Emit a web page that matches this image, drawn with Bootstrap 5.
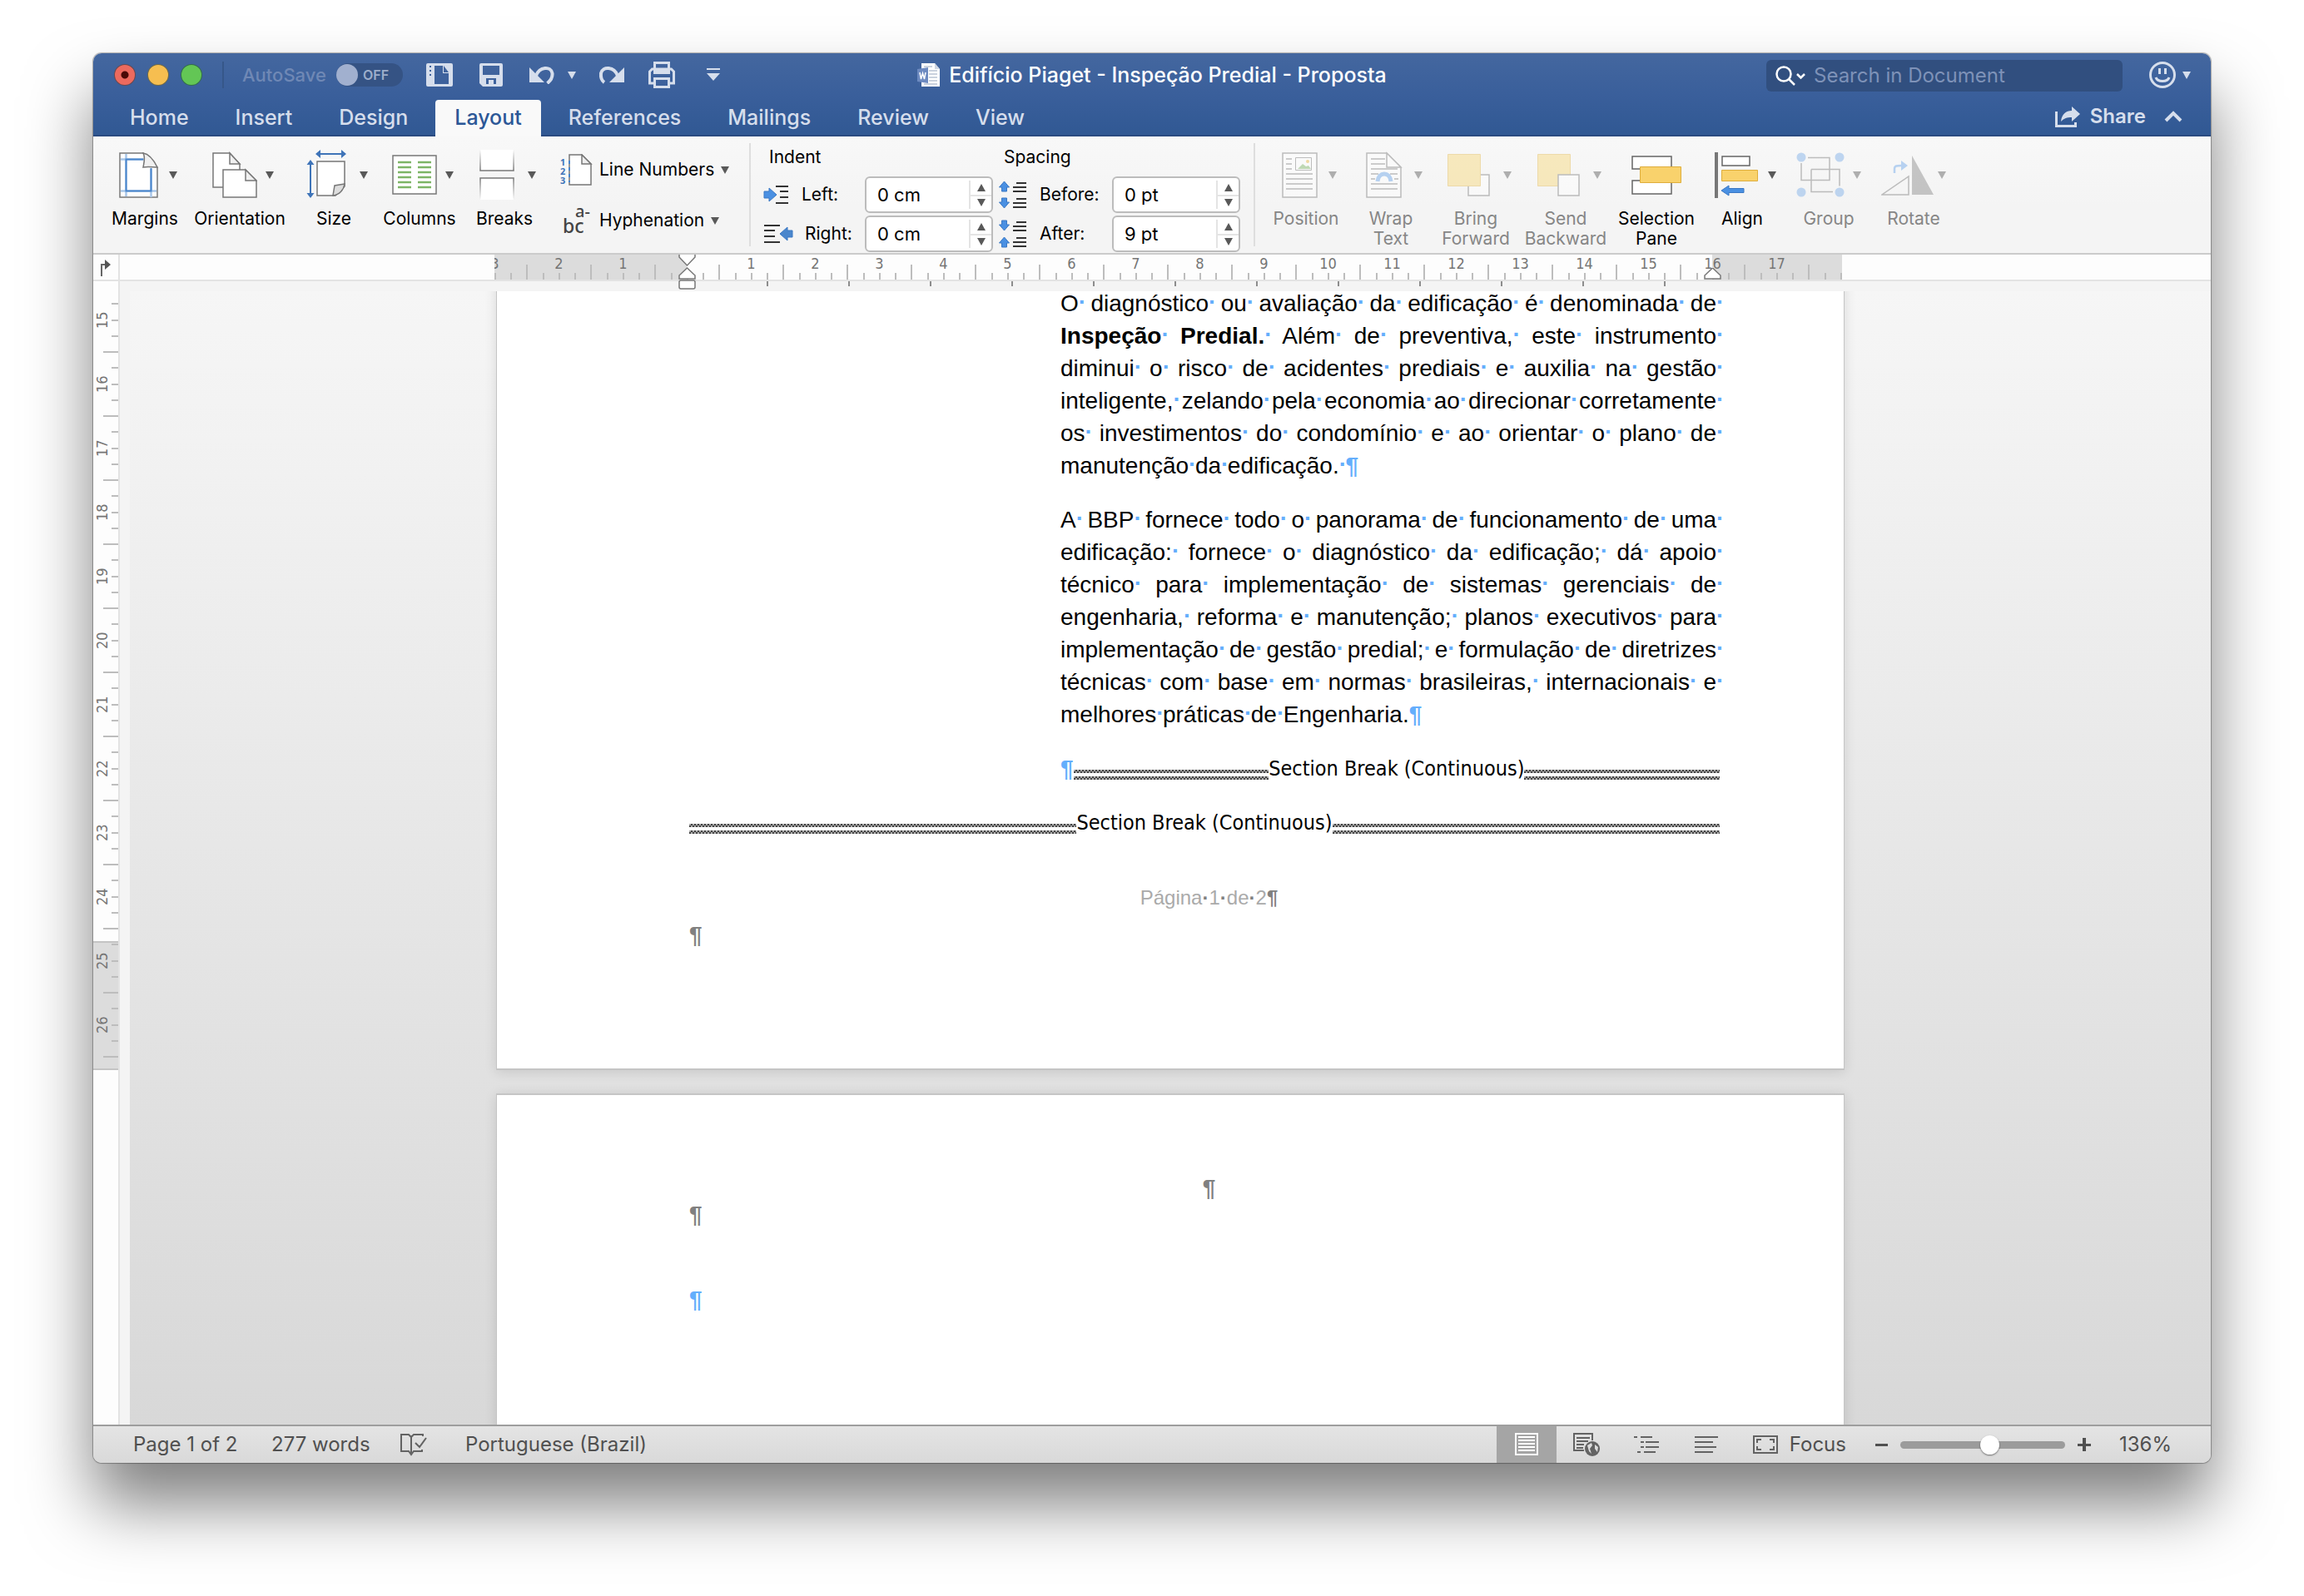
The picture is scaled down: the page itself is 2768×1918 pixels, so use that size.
<!DOCTYPE html>
<html lang="en">
<head>
<meta charset="utf-8">
<meta name="viewport" content="width=device-width, initial-scale=1">
<title>Edifício Piaget - Inspeção Predial - Proposta</title>
<link href="https://cdn.jsdelivr.net/npm/bootstrap@5.3.0/dist/css/bootstrap.min.css" rel="stylesheet">
<style>
:root{--ui:Inter,Roboto,"Liberation Sans",sans-serif;--pale:#d6deec}
body{font-family:var(--ui);background:#fff;padding:64px 112px 160px;color:#000}
svg{display:block;flex:none}
button{font-family:inherit;color:inherit;background:none;border:0;padding:0}
.win{border-radius:10px;overflow:hidden;box-shadow:0 0 1px 1px rgba(0,0,0,.3),0 50px 80px rgba(0,0,0,.5);background:#f4f4f4;min-height:0}
.tri{width:0;height:0;border:5px solid transparent;border-top:9px solid #595959;border-bottom:0;flex:none}
/* title bar */
.top{background:linear-gradient(#44679f,#3a5f9b 50%,#305893);color:var(--pale)}
.top .tri{border-top-color:var(--pale)}
.titlebar{display:grid;grid-template-columns:1fr auto 1fr;height:56px;padding-bottom:4px}
.lights{gap:14px;padding-left:25px}
.light{width:26px;height:26px;border-radius:50%;border:1px solid rgba(20,50,70,.6)}
.light.red{background:radial-gradient(circle,#4a0a06 0 4px,#ec6a5e 5px)}
.light.yel{background:#f6be50}.light.grn{background:#63c655}
.bar-sep{width:2px;height:32px;background:#365789;margin:0 22px 0 24px}
.autosave{font-size:22px;font-weight:500;color:#6f88b5;width:102px}
.pill{width:80px;height:28px;border-radius:14px;background:#355384;font-size:16px;font-weight:600;color:#9daecb;gap:6px;margin-left:11px}
.knob{appearance:none;width:26px;height:26px;border-radius:50%;background:#a1b0cf;margin:0}
.quick{gap:32px;margin-left:28px}
.titlemid{gap:11px}
.doctitle{font-size:25px;font-weight:500;color:#fff;line-height:32px}
.search{width:428px;height:38px;border-radius:6px;background:#314f7f;margin-top:1px;padding-left:11px;gap:10px}
.search input{background:none;border:0;outline:0;color:#fff;font-size:24px;width:100%;padding:0}
.search input::placeholder{color:#7e92b8;opacity:1}
.tabs{height:44px;border-bottom:2px solid #2a4a80;padding-left:16px}
.tabs a{color:var(--pale);text-decoration:none;font-size:25px;font-weight:500;line-height:42px;padding:0 23px;margin:0 5px}
.tabs a.on{background:#f9f9f9;color:#2b5797;border-radius:4px 4px 0 0;height:44px}
.share{font-size:24px;font-weight:600;gap:12px}
/* ribbon */
.ribbon{background:linear-gradient(#f8f8f8,#f4f4f4 60%);height:142px;border-bottom:2px solid #cbcbcb;padding-left:8px;font-size:21px;line-height:24px}
.big{padding-top:14px;text-align:center}
.big .pic{height:64px;margin-bottom:9px;gap:10px;padding-left:8px}
.big .pic.flat{padding-left:0}
.big:disabled{color:#868686}
.big:disabled .pic{opacity:.45}
.w94{width:94px}.w98{width:98px}.w100{width:100px}.w104{width:104px}.w106{width:106px}.w108{width:108px}.w110{width:110px}.w120{width:120px}
.stack{padding:14px 0 0 14px;width:242px}
.stack button{height:52px;gap:8px;margin-bottom:9px}
.vr-line{width:2px;height:124px;background:#dedede;margin-top:8px}
.grid-ind{display:grid;padding:9px 0 0 15px;row-gap:3px}
.grid-ind.a{grid-template-columns:46px 76px 154px;width:297px}
.grid-ind.b{grid-template-columns:50px 87px 154px;width:307px;padding-left:0}
.grid-ind h2{grid-column:1/-1;font-size:21px;line-height:24px;height:36px;margin:0;font-weight:400;padding:4px 0 0 7px}
.spin{height:44px;border:2px solid #bcbcbc;border-radius:6px;background:#fff}
.spin input{border:0;outline:0;width:100%;font-size:22px;padding:0 0 0 13px;background:none}
.spin div{width:27px;flex:none;border-left:2px solid #e4e4e4;margin:3px 0}
.spin button{height:18px}
.spin button+button{border-top:2px solid #e4e4e4}
.tri.up{border-top:0;border-bottom:9px solid #595959}
/* rulers */
.hruler{height:32px;background:#fdfdfd;border-bottom:2px solid #e3e3e3;font-family:"DejaVu Sans Condensed","DejaVu Sans",sans-serif;font-size:18px;color:#757575;line-height:22px}
.corner{width:32px;border-right:2px solid #e3e3e3}
.scalewrap{padding-left:7px}
.scale{width:1619px;height:30px;position:relative;
background:
linear-gradient(90deg,#bdbdbd 2px,transparent 0) 0 100%/77px 8px repeat-x,
linear-gradient(90deg,#bdbdbd 2px,transparent 0) 19px 100%/77px 8px repeat-x,
linear-gradient(90deg,#bdbdbd 2px,transparent 0) 38px 100%/77px 18px repeat-x,
linear-gradient(90deg,#bdbdbd 2px,transparent 0) 58px 100%/77px 8px repeat-x,
linear-gradient(90deg,#dcdcdc 231px,transparent 231px 1463px,#dcdcdc 1463px)}
.nums{overflow:hidden}
.nums span{width:77px;flex:none;text-align:center;margin-left:-38px;margin-right:38px}
.pin{position:absolute;z-index:2}
.pin.l{left:221px;top:0}.pin.r{left:1453px;top:16px}
.tabstops{height:12px;background:#f4f4f4;padding-left:7px}
.tabstops div{width:1619px}
.tabstops i{display:block;margin-left:231px;width:1232px;height:6px;background:linear-gradient(90deg,transparent 96px,#8d8d8d 0) 0 0/98px 6px repeat-x}
.vruler{width:32px;border-right:2px solid #e3e3e3;background:#fdfdfd;font-family:"DejaVu Sans Condensed","DejaVu Sans",sans-serif;font-size:18px;color:#757575;overflow:hidden;padding-top:12px}
.vscale{height:936px;background:
linear-gradient(#bdbdbd 2px,transparent 0) 100% 34px/8px 77px repeat-y,
linear-gradient(#bdbdbd 2px,transparent 0) 100% 53px/8px 77px repeat-y,
linear-gradient(#bdbdbd 2px,transparent 0) 100% 72px/18px 77px repeat-y,
linear-gradient(#bdbdbd 2px,transparent 0) 100% 91px/8px 77px repeat-y,
linear-gradient(transparent 781px,#c4c4c4 781px 783px,#dcdcdc 783px);border-bottom:2px solid #c4c4c4;overflow:hidden}
.vscale span{display:block;height:77px;writing-mode:vertical-rl;transform:rotate(180deg);text-align:center;line-height:22px;width:22px}
.vscale span:first-child{margin-top:-4px}
.canvas-pad{width:12px;background:#f4f4f4}
.canvas{background:linear-gradient(#f6f6f6,#e6e6e6 52%,#d8d8d8);overflow:hidden;min-width:0}
/* pages */
.sheet{width:1620px;margin:0 auto 28px;border:2px solid #c5c5c5;border-width:2px 1px;background:#fff;box-shadow:0 2px 14px rgba(0,0,0,.12);padding:92px 153px 0 231px;font:28px/39px "Liberation Sans",Arial,sans-serif;color:#000;flex:none;height:976px}
.sheet.first{margin-top:-40px;padding-top:33px}
.sheet p{margin:0 0 26px}
.col-text{padding-left:446px}
.ln{display:block;white-space:nowrap;text-align:justify;text-align-last:justify}
.ln.end{text-align-last:left}
.wd{position:relative}
.wd::after{content:"·";position:absolute;left:100%;top:0;color:#64aefc;line-height:1;font-weight:700}
.pil{color:#64aefc;font-weight:700}
.pil.g{color:#808080}
.brk{height:39px;margin:0 -4px 26px 0;font:25px/39px "DejaVu Sans Condensed","DejaVu Sans",sans-serif}
.brk .pil{font:700 28px/39px "Liberation Sans",Arial,sans-serif}
.brk hr{flex:1;height:12px;margin:14px 0 0;border:0;opacity:1;background:linear-gradient(transparent 4px,#fff 4px 8px,transparent 8px),repeating-conic-gradient(#444 0 25%,#a8a8a8 0 50%) 0 0/4px 4px}
.foot{font-size:24px;line-height:32px;margin-top:55px;color:#aaa;margin-bottom:9px}
.foot b{color:#808080}
.foot .pil,.mid .pil{margin-right:-15px}
.mid{height:32px}
.gap-head{height:102px}
/* status bar */
.status{height:46px;border-top:2px solid #9e9e9e;background:linear-gradient(#e4e4e4,#d9d9d9);font-size:24px;line-height:32px;color:#505050;padding:0 47px 0 48px}
.st-page{width:166px}.st-words{width:155px}.st-proof{width:78px}
.view{width:72px;height:44px}
.view.on{background:#a5a5a5}
.focus-btn{gap:13px;margin-left:20px;margin-right:33px}
.zoom{appearance:none;width:198px;height:9px;border-radius:5px;background:#9b9b9b;margin:0 15px}
.zoom::-webkit-slider-thumb{appearance:none;width:23px;height:23px;border-radius:50%;background:#fff;box-shadow:0 1px 2px rgba(0,0,0,.5)}
.pct{margin-left:33px}
</style>
<script src="https://cdn.jsdelivr.net/npm/bootstrap@5.3.0/dist/js/bootstrap.bundle.min.js"></script>
</head>
<body class="vh-100 d-flex flex-column overflow-hidden">
<div class="win d-flex flex-column flex-grow-1">

<header class="top flex-shrink-0">
  <div class="titlebar">
    <div class="d-flex align-items-center">
      <div class="lights d-flex"><span class="light red"></span><span class="light yel"></span><span class="light grn"></span></div>
      <span class="bar-sep"></span>
      <label class="autosave" for="auto">AutoSave</label>
      <span class="pill d-flex align-items-center"><input type="checkbox" role="switch" class="knob" id="auto">OFF</span>
      <div class="quick d-flex align-items-center">
      <button aria-label="Templates"><svg width="32" height="28" viewBox="0 0 32 28"><path fill="#d6deec" fill-rule="evenodd" d="M2 0h28a2 2 0 0 1 2 2v24a2 2 0 0 1-2 2H2a2 2 0 0 1-2-2V2a2 2 0 0 1 2-2zM10 3v22h17V12h-7V3zM21 3v8h6z"/><path stroke="#3d629d" stroke-width="2" stroke-dasharray="2 3" d="M5 3v12"/></svg></button>
      <button aria-label="Save"><svg width="28" height="28" viewBox="0 0 28 28"><path fill="#d6deec" fill-rule="evenodd" d="M2 0h24a2 2 0 0 1 2 2v24a2 2 0 0 1-2 2H4l-4-4V2a2 2 0 0 1 2-2zM4 3v11h20V3zM8 18v7h3v-5h6v5h3v-7z"/><path fill="#d6deec" d="M12 21h3v5h-3z"/></svg></button>
      <button aria-label="Undo" class="d-flex align-items-center gap-3"><svg width="30" height="22" viewBox="0 0 30 22"><path fill="#d6deec" d="M0 2v18h18z"/><path fill="none" stroke="#d6deec" stroke-width="4" d="M8 12C12 1 26 0 27.500 9c.5 5-2 9-6 12"/></svg><span class="tri"></span></button>
      <button aria-label="Redo" style="margin-left:-5px"><svg width="31" height="22" viewBox="0 0 31 22"><path fill="#d6deec" d="M31 2v18H13z"/><path fill="none" stroke="#d6deec" stroke-width="4" d="M23 12C19 1 5 0 3 9c-.5 5 1 9 4 11"/></svg></button>
      <button aria-label="Print" style="margin-left:-3px"><svg width="32" height="32" viewBox="0 0 32 32"><g fill="none" stroke="#d6deec" stroke-width="3"><path d="M7.500 10V1.500h17V10M7 26H1.500V12l3-3h23l3 3v14H25"/><path d="M7.500 20.500h17v10h-17z"/></g><path fill="#d6deec" d="M6 9h20v6H6z"/></svg></button>
      <button aria-label="Customize toolbar"><svg width="28" height="16" viewBox="-6 0 28 16"><path fill="#d6deec" d="M0 0h16v2H0zM0 6h16l-8 9z"/></svg></button>
      </div>
    </div>
    <div class="titlemid d-flex align-items-center">
      <svg width="27" height="28" viewBox="0 0 27 28"><path fill="#fff" d="M5 0h16l6 7v21H5z"/><path stroke="#b9c3d3" stroke-width="1.500" d="M14 9h10M14 13h10M14 17h10M14 21h10M8 25h16M8 4h10"/><path fill="#cfd6e2" d="M21 0v7h6z"/><path fill="#6d8ac0" d="M0 7l13-2v19L0 22z"/><path fill="none" stroke="#fff" stroke-width="1.500" d="M3 11l1.500 8L6.500 12l2 7 1.500-8"/></svg>
      <span class="doctitle">Edifício Piaget - Inspeção Predial - Proposta</span>
    </div>
    <div class="d-flex align-items-center justify-content-end pe-4">
      <div class="search d-flex align-items-center">
        <svg width="36" height="24" viewBox="0 0 36 24"><g fill="none" stroke="#fff" stroke-width="2.500"><circle cx="10" cy="10" r="8.500"/><path d="M16 16l7 7M26 10l4.500 4.500L35 10"/></g></svg>
        <input type="text" aria-label="Search in Document" placeholder="Search in Document">
      </div>
      <button aria-label="Feedback" class="d-flex align-items-center gap-2" style="margin-left:32px"><svg width="32" height="32" viewBox="0 0 32 32"><g fill="none" stroke="#d6deec" stroke-width="3"><circle cx="16" cy="16" r="14.500"/><path d="M12.500 8v7M19.500 8v7M8 19c2 6 14 6 16 0"/></g></svg><span class="tri"></span></button>
    </div>
  </div>
  <div class="tabs d-flex align-items-start">
    <nav class="d-flex"><a href="#">Home</a><a href="#">Insert</a><a href="#">Design</a><a href="#" class="on">Layout</a><a href="#">References</a><a href="#">Mailings</a><a href="#">Review</a><a href="#">View</a></nav>
    <div class="d-flex align-items-center ms-auto" style="padding-right:34px;height:40px">
      <button class="share d-flex align-items-center"><svg width="30" height="25" viewBox="0 0 30 25"><path fill="none" stroke="#d6deec" stroke-width="3" d="M1.500 6v17.500h23V19"/><path fill="#d6deec" d="M7 18C8 9 13 5 20 5V0l10 9-10 9v-5c-6 0-9 1-13 5z"/></svg>Share</button>
      <button aria-label="Collapse ribbon" style="margin-left:22px"><svg width="22" height="14" viewBox="0 0 22 14"><path fill="none" stroke="#d6deec" stroke-width="4" d="M2 12l9-9 9 9"/></svg></button>
    </div>
  </div>
</header>

<div class="ribbon d-flex align-items-start flex-shrink-0">
  <button class="big w108"><span class="pic d-flex align-items-center justify-content-center"><svg width="50" height="64" viewBox="0 0 50 64"><path fill="#fff" stroke="#777" stroke-width="1.500" d="M1 6h28l17 17v36H1z"/><path stroke="#a9c6e8" stroke-width="2.500" d="M8.500 7v51M38.500 25v34M2 13.500h28M2 51.500h43"/><path fill="none" stroke="#4a86cc" stroke-width="2" d="M29 13.500H8.500v38h30V24"/><path fill="#f0f0f0" stroke="#777" stroke-width="1.500" d="M29 6c3 6 1 11 0 17 6-1 12 0 17 0C42 15 36 7 29 6z"/></svg><span class="tri"></span></span>Margins</button>
  <button class="big w120"><span class="pic d-flex align-items-center justify-content-center"><svg width="54" height="64" viewBox="0 0 54 64"><g fill="#fff" stroke="#777" stroke-width="1.500"><path d="M1 6h20l12 13v28H1z"/><path fill="#f0f0f0" d="M21 6v13h12z"/><path d="M13 26h27l13 13v20H13z"/><path fill="#f0f0f0" d="M40 26v13h13z"/></g></svg><span class="tri"></span></span>Orientation</button>
  <button class="big w106"><span class="pic d-flex align-items-center justify-content-center"><svg width="54" height="64" viewBox="0 0 54 64"><path fill="#fff" stroke="#777" stroke-width="1.500" d="M13 16h33v30L35 57H13z"/><path fill="#ddd" stroke="#777" stroke-width="1.500" d="M46 43l-12 2-2 12c8-1 13-7 14-14z"/><g stroke="#3f74b8" stroke-width="2"><path d="M14 7h32M5 17v39"/></g><path fill="#3f74b8" d="M11 7l6-5v10zM48 7l-6-5v10zM5 14l-4.500 6h9zM5 60l-4.500-6h9z"/></svg><span class="tri"></span></span>Size</button>
  <button class="big w100"><span class="pic d-flex align-items-center justify-content-center"><svg width="54" height="64" viewBox="0 0 54 64"><path fill="#fff" stroke="#777" stroke-width="1.500" d="M1 9h52v46H1z"/><path stroke="#7db566" stroke-width="2.500" d="M7 17h16M7 23h16M7 29h16M7 35h16M7 41h16M7 47h16M31 17h16M31 23h16M31 29h16M31 35h16M31 41h16M31 47h16"/></svg><span class="tri"></span></span>Columns</button>
  <button class="big w104"><span class="pic d-flex align-items-center justify-content-center"><svg width="48" height="64" viewBox="0 0 48 64"><defs><linearGradient id="fa" x2="0" y2="1"><stop stop-color="#777" stop-opacity="0"/><stop offset="1" stop-color="#777"/></linearGradient><linearGradient id="fb" x2="0" y2="1"><stop stop-color="#777"/><stop offset="1" stop-color="#777" stop-opacity="0"/></linearGradient></defs><path fill="#fff" stroke="url(#fa)" stroke-width="1.500" d="M1 2v25h40V2"/><path fill="#fff" stroke="url(#fb)" stroke-width="1.500" d="M1 62V36h40v26"/></svg><span class="tri"></span></span>Breaks</button>
  <div class="stack">
    <button class="d-flex align-items-center"><svg width="40" height="38" viewBox="0 0 40 38"><path fill="#fff" stroke="#777" stroke-width="1.500" d="M12 1h15l11 11v25H12z"/><path fill="#eee" stroke="#777" stroke-width="1.500" d="M27 1v11h11z"/><path stroke="#4a86cc" stroke-width="2" stroke-dasharray="4 4" d="M12 8v26"/><g fill="#3f74b8" font-family="Open Sans,sans-serif" font-size="11" font-weight="700"><text x="1" y="14">1</text><text x="1" y="25">2</text><text x="1" y="36">3</text></g></svg>Line Numbers<span class="tri"></span></button>
    <button class="d-flex align-items-center"><svg width="40" height="44" viewBox="0 0 40 44" overflow="visible"><g fill="#444" font-family="Noto Sans,sans-serif" font-weight="500"><text x="19" y="18" font-size="20">a-</text><text x="4" y="37" font-size="23">bc</text></g></svg>Hyphenation<span class="tri"></span></button>
  </div>
  <div class="vr-line"></div>
  <div class="grid-ind a align-items-center">
    <h2>Indent</h2>
    <svg width="32" height="24" viewBox="0 0 32 24"><path fill="#4a90e2" stroke="#3b78c4" d="M1 8h6V4l9 8-9 8v-4H1z"/><path stroke="#333" stroke-width="2" d="M15 2h15M20 8h10M20 15h10M15 22h15"/></svg><label for="il">Left:</label>
    <div class="spin d-flex"><input id="il" type="text" value="0 cm"><div class="d-flex flex-column"><button class="d-flex align-items-center justify-content-center" aria-label="Increase left"><span class="tri up"></span></button><button class="d-flex align-items-center justify-content-center" aria-label="Decrease left"><span class="tri"></span></button></div></div>
    <svg width="36" height="24" viewBox="0 0 36 24"><path fill="#4a86cc" stroke="#3b78c4" d="M35 8h-6V4l-9 8 9 8v-4h6z"/><path stroke="#333" stroke-width="2" d="M1 2h19M1 8h13M1 15h13M1 22h19"/></svg><label for="ir" class="ps-1">Right:</label>
    <div class="spin d-flex"><input id="ir" type="text" value="0 cm"><div class="d-flex flex-column"><button class="d-flex align-items-center justify-content-center" aria-label="Increase right"><span class="tri up"></span></button><button class="d-flex align-items-center justify-content-center" aria-label="Decrease right"><span class="tri"></span></button></div></div>
  </div>
  <div class="grid-ind b align-items-center">
    <h2>Spacing</h2>
    <svg width="36" height="34" viewBox="0 0 36 34"><path fill="#4a90e2" stroke="#3b78c4" d="M7.500 1l6 7h-3v5h-6V8h-3zM7.500 33l6-7h-3v-5h-6v5h-3z"/><path stroke="#333" stroke-width="2" d="M22 3h12M18 8h16M18 13h16M22 22h12M18 27h16M18 32h16"/></svg><label for="sb">Before:</label>
    <div class="spin d-flex"><input id="sb" type="text" value="0 pt"><div class="d-flex flex-column"><button class="d-flex align-items-center justify-content-center" aria-label="Increase before"><span class="tri up"></span></button><button class="d-flex align-items-center justify-content-center" aria-label="Decrease before"><span class="tri"></span></button></div></div>
    <svg width="36" height="34" viewBox="0 0 36 34"><path fill="#4a90e2" stroke="#3b78c4" d="M7.500 13l6-7h-3V1h-6v5h-3zM7.500 21l6 7h-3v5h-6v-5h-3z"/><path stroke="#333" stroke-width="2" d="M22 3h12M18 8h16M18 13h16M22 22h12M18 27h16M18 32h16"/></svg><label for="sa">After:</label>
    <div class="spin d-flex"><input id="sa" type="text" value="9 pt"><div class="d-flex flex-column"><button class="d-flex align-items-center justify-content-center" aria-label="Increase after"><span class="tri up"></span></button><button class="d-flex align-items-center justify-content-center" aria-label="Decrease after"><span class="tri"></span></button></div></div>
  </div>
  <div class="vr-line me-2"></div>
  <button class="big w106" disabled><span class="pic d-flex align-items-center justify-content-center"><svg width="46" height="64" viewBox="0 0 46 64"><path fill="#fff" stroke="#777" stroke-width="1.500" d="M1 6h41v53H1z"/><path stroke="#999" stroke-width="2" d="M5 13h7M5 19h7M5 25h7M5 31h32M5 37h32M5 43h32M5 49h32"/><path fill="#fff" stroke="#777" d="M16.500 11.500h19v15h-19z"/><path fill="#7db566" d="M19 25l6-6 4 3 3-1 3 4z"/><circle cx="31" cy="16" r="2" fill="#e9b53c"/></svg><span class="tri"></span></span>Position</button>
  <button class="big w98" disabled><span class="pic d-flex align-items-center justify-content-center"><svg width="48" height="64" viewBox="0 0 48 64"><path fill="#fff" stroke="#777" stroke-width="1.500" d="M1 6h24l17 17v36H1z"/><path fill="#fff" stroke="#777" stroke-width="1.500" d="M25 6v17h17z"/><path stroke="#999" stroke-width="2" d="M6 13h17M6 19h17M6 25h32M6 31h9M29 31h9M6 37h5M34 37h5M6 43h32M6 49h32"/><path fill="none" stroke="#6aa5ea" stroke-width="5" d="M14 40c1-12 15-12 16 0"/></svg><span class="tri"></span></span>Wrap<br>Text</button>
  <button class="big w106" disabled><span class="pic d-flex align-items-center justify-content-center"><svg width="58" height="64" viewBox="0 0 58 64"><path fill="#fff" stroke="#777" stroke-width="1.500" d="M26 32h25v25H26z"/><path fill="#f8d878" stroke="#e3b94e" d="M1.500 7.500h39v38h-39z"/></svg><span class="tri"></span></span>Bring<br>Forward</button>
  <button class="big w110" disabled><span class="pic d-flex align-items-center justify-content-center"><svg width="58" height="64" viewBox="0 0 58 64"><path fill="#f8d878" stroke="#e3b94e" d="M1.500 7.500h39v38h-39z"/><path fill="#fff" stroke="#777" stroke-width="1.500" d="M26 32h25v25H26z"/></svg><span class="tri"></span></span>Send<br>Backward</button>
  <button class="big w108"><span class="pic flat d-flex align-items-center justify-content-center"><svg width="60" height="64" viewBox="0 0 60 64"><path fill="#fff" stroke="#666" stroke-width="1.500" d="M1 10h47v15H1zM1 39h47v16H1z"/><path fill="#f9d26c" stroke="#dfae3c" d="M10.500 22.500h49v19h-49z"/></svg></span>Selection<br>Pane</button>
  <button class="big w98"><span class="pic d-flex align-items-center justify-content-center"><svg width="54" height="64" viewBox="0 0 54 64"><path fill="#777" d="M0 5h4v55H0z"/><path fill="#fff" stroke="#666" stroke-width="1.500" d="M9 10h33v11H9z"/><path fill="#f9d26c" stroke="#dfae3c" d="M8.500 26.500h43v13h-43z"/><path fill="#4a90e2" stroke="#3b78c4" d="M8 51l9-6v3.500h18v5H17V57z"/></svg><span class="tri"></span></span>Align</button>
  <button class="big w110" disabled><span class="pic flat d-flex align-items-center justify-content-center"><svg width="58" height="64" viewBox="0 0 58 64"><path fill="none" stroke="#777" stroke-width="1.500" d="M14 11.500h26v27H6V18M18 25.500h34v20M44 52.500H18v-27"/><g fill="#7aade8"><circle cx="6" cy="11" r="5.500"/><circle cx="52" cy="11" r="5.500"/><circle cx="6" cy="53" r="5.500"/><circle cx="52" cy="53" r="5.500"/></g></svg><span class="tri"></span></span>Group</button>
  <button class="big w94" disabled><span class="pic flat d-flex align-items-center justify-content-center"><svg width="64" height="64" viewBox="0 0 64 64"><path fill="none" stroke="#777" stroke-width="1.500" d="M1 56h32V34z"/><path fill="#888" d="M37 9v47h26z"/><path fill="none" stroke="#6aa5ea" stroke-width="2.500" d="M16 30v-5c0-4 3-4 8-4"/><path fill="#6aa5ea" d="M24 15l8 6-8 6z"/></svg><span class="tri" style="margin-left:-6px"></span></span>Rotate</button>
</div>

<div class="hruler d-flex flex-shrink-0">
  <div class="corner d-flex align-items-center justify-content-center"><svg width="16" height="22" viewBox="0 0 16 22"><path fill="none" stroke="#666" stroke-width="2" d="M3 22V8h6"/><path fill="#555" d="M7 2l7 6-7 6z"/></svg></div>
  <div class="scalewrap d-flex justify-content-center flex-grow-1"><div class="scale"><div class="nums d-flex"><span>3</span><span>2</span><span>1</span><span></span><span>1</span><span>2</span><span>3</span><span>4</span><span>5</span><span>6</span><span>7</span><span>8</span><span>9</span><span>10</span><span>11</span><span>12</span><span>13</span><span>14</span><span>15</span><span>16</span><span>17</span></div>
    <svg class="pin l" width="21" height="42" viewBox="0 0 21 42"><g fill="#fff" stroke="#777" stroke-width="1.500"><path d="M1 0v3l9.500 10L20 3V0M10.500 16L20 25v4H1v-4z"/><rect x="1" y="31" width="19" height="10" rx="2"/></g></svg>
    <svg class="pin r" width="21" height="14" viewBox="0 0 21 14"><path fill="#fff" stroke="#777" stroke-width="1.500" d="M10.500 0L20 9v4H1V9z"/></svg>
  </div></div>
</div>

<div class="d-flex flex-grow-1" style="min-height:0">
  <div class="vruler flex-shrink-0"><div class="vscale"><span>15</span><span>16</span><span>17</span><span>18</span><span>19</span><span>20</span><span>21</span><span>22</span><span>23</span><span>24</span><span>25</span><span>26</span></div></div>
  <div class="d-flex flex-column flex-grow-1" style="min-width:0">
    <div class="tabstops d-flex justify-content-center flex-shrink-0"><div><i></i></div></div>
    <div class="d-flex flex-grow-1" style="min-height:0">
      <div class="canvas-pad flex-shrink-0"></div>
      <main class="canvas flex-grow-1 d-flex flex-column">
        <article class="sheet first">
          <div class="col-text">
            <p><span class="ln">O diagnóstico ou avaliação da edificação é denominada de</span>
            <span class="ln"><strong>Inspeção Predial.</strong> Além de preventiva, este instrumento</span>
            <span class="ln">diminui o risco de acidentes prediais e auxilia na gestão</span>
            <span class="ln">inteligente, zelando pela economia ao direcionar corretamente</span>
            <span class="ln">os investimentos do condomínio e ao orientar o plano de</span>
            <span class="ln end">manutenção da edificação. <span class="pil">¶</span></span></p>
            <p><span class="ln">A BBP fornece todo o panorama de funcionamento de uma</span>
            <span class="ln">edificação: fornece o diagnóstico da edificação; dá apoio</span>
            <span class="ln">técnico para implementação de sistemas gerenciais de</span>
            <span class="ln">engenharia, reforma e manutenção; planos executivos para</span>
            <span class="ln">implementação de gestão predial; e formulação de diretrizes</span>
            <span class="ln">técnicas com base em normas brasileiras, internacionais e</span>
            <span class="ln end">melhores práticas de Engenharia.<span class="pil">¶</span></span></p>
            <div class="brk d-flex align-items-center"><span class="pil">¶</span><hr><span>Section Break (Continuous)</span><hr></div>
          </div>
          <div class="brk d-flex align-items-center"><hr><span>Section Break (Continuous)</span><hr></div>
          <div class="foot text-center">Página<b>·</b>1<b>·</b>de<b>·</b>2<span class="pil g">¶</span></div>
          <div><span class="pil g">¶</span></div>
        </article>
        <article class="sheet">
          <div class="mid text-center"><span class="pil g">¶</span></div>
          <div class="gap-head"><span class="pil g">¶</span></div>
          <div><span class="pil">¶</span></div>
        </article>
      </main>
    </div>
  </div>
</div>

<footer class="status d-flex align-items-center flex-shrink-0">
  <span class="st-page">Page 1 of 2</span><span class="st-words">277 words</span>
  <button aria-label="Proofing" class="st-proof"><svg width="32" height="28" viewBox="0 0 32 28"><path fill="none" stroke="#636363" stroke-width="2" d="M27 4V2H16l-3 3-3-3H1v20h9l3 4 3-4h10v-2M13 5v20M18 12l5 5 8-11"/></svg></button>
  <span>Portuguese (Brazil)</span>
  <div class="d-flex align-items-center ms-auto">
    <button class="view on d-flex align-items-center justify-content-center" aria-label="Print layout"><svg width="28" height="28" viewBox="0 0 28 28"><path fill="none" stroke="#fff" stroke-width="2" d="M1 1h26v25H1z"/><path stroke="#fff" stroke-width="2" d="M4 5h20M4 9h20M4 13h20M4 17h20M4 21h20"/></svg></button>
    <button class="view d-flex align-items-center justify-content-center" aria-label="Web layout"><svg width="32" height="30" viewBox="0 0 32 30"><path fill="none" stroke="#636363" stroke-width="2" d="M23 10V2H1v20h12M4 7h16M4 11h14M4 15h9M4 19h8"/><circle cx="23" cy="20" r="9" fill="#636363"/><path fill="#ddd" d="M17 16l5-3 1 3-3 4 2 6-3-3zM26 15l4 3-1 6-3-4z"/></svg></button>
    <button class="view d-flex align-items-center justify-content-center" aria-label="Outline"><svg width="30" height="24" viewBox="0 0 30 24"><path stroke="#636363" stroke-width="2" d="M0 3h4M8 3h14M8 9h4M14 9h16M8 15h4M14 15h16M4 21h4M12 21h14"/></svg></button>
    <button class="view d-flex align-items-center justify-content-center" aria-label="Draft"><svg width="28" height="24" viewBox="0 0 28 24"><path stroke="#636363" stroke-width="2" d="M0 3h28M0 9h22M0 15h26M0 21h22"/></svg></button>
    <button class="focus-btn d-flex align-items-center"><svg width="31" height="24" viewBox="0 0 31 24"><path fill="none" stroke="#636363" stroke-width="2" d="M1 2h28v20H1zM5 10V6h5M20 6h5v4M25 14v4h-5M10 18H5v-4"/></svg>Focus</button>
    <button aria-label="Zoom out"><svg width="17" height="17" viewBox="0 0 17 17"><path fill="#505050" d="M2 7h15v3H2z"/></svg></button>
    <input class="zoom" type="range" min="0" max="100" value="55" aria-label="Zoom">
    <button aria-label="Zoom in"><svg width="17" height="17" viewBox="0 0 17 17"><path fill="#505050" d="M0 7h16v3H0zM6 0h4v16H6z"/></svg></button>
    <span class="pct">136%</span>
  </div>
</footer>
</div>
<script>
// Show a formatting dot after every word of the body text.
document.querySelectorAll('.ln').forEach(function(l){
  var w=document.createTreeWalker(l,NodeFilter.SHOW_TEXT),t,a=[];
  while(t=w.nextNode())if(!t.parentNode.classList.contains('pil'))a.push(t);
  a.forEach(function(n){
    var f=document.createDocumentFragment();
    n.data.split(/(\s+)/).forEach(function(s){
      if(!s)return;
      if(/^\s/.test(s)){f.append(s);return}
      var e=document.createElement('span');
      if(!/Engenharia/.test(s))e.className='wd';
      e.textContent=s;f.append(e);
    });
    n.replaceWith(f);
  });
});
</script>
</body>
</html>
